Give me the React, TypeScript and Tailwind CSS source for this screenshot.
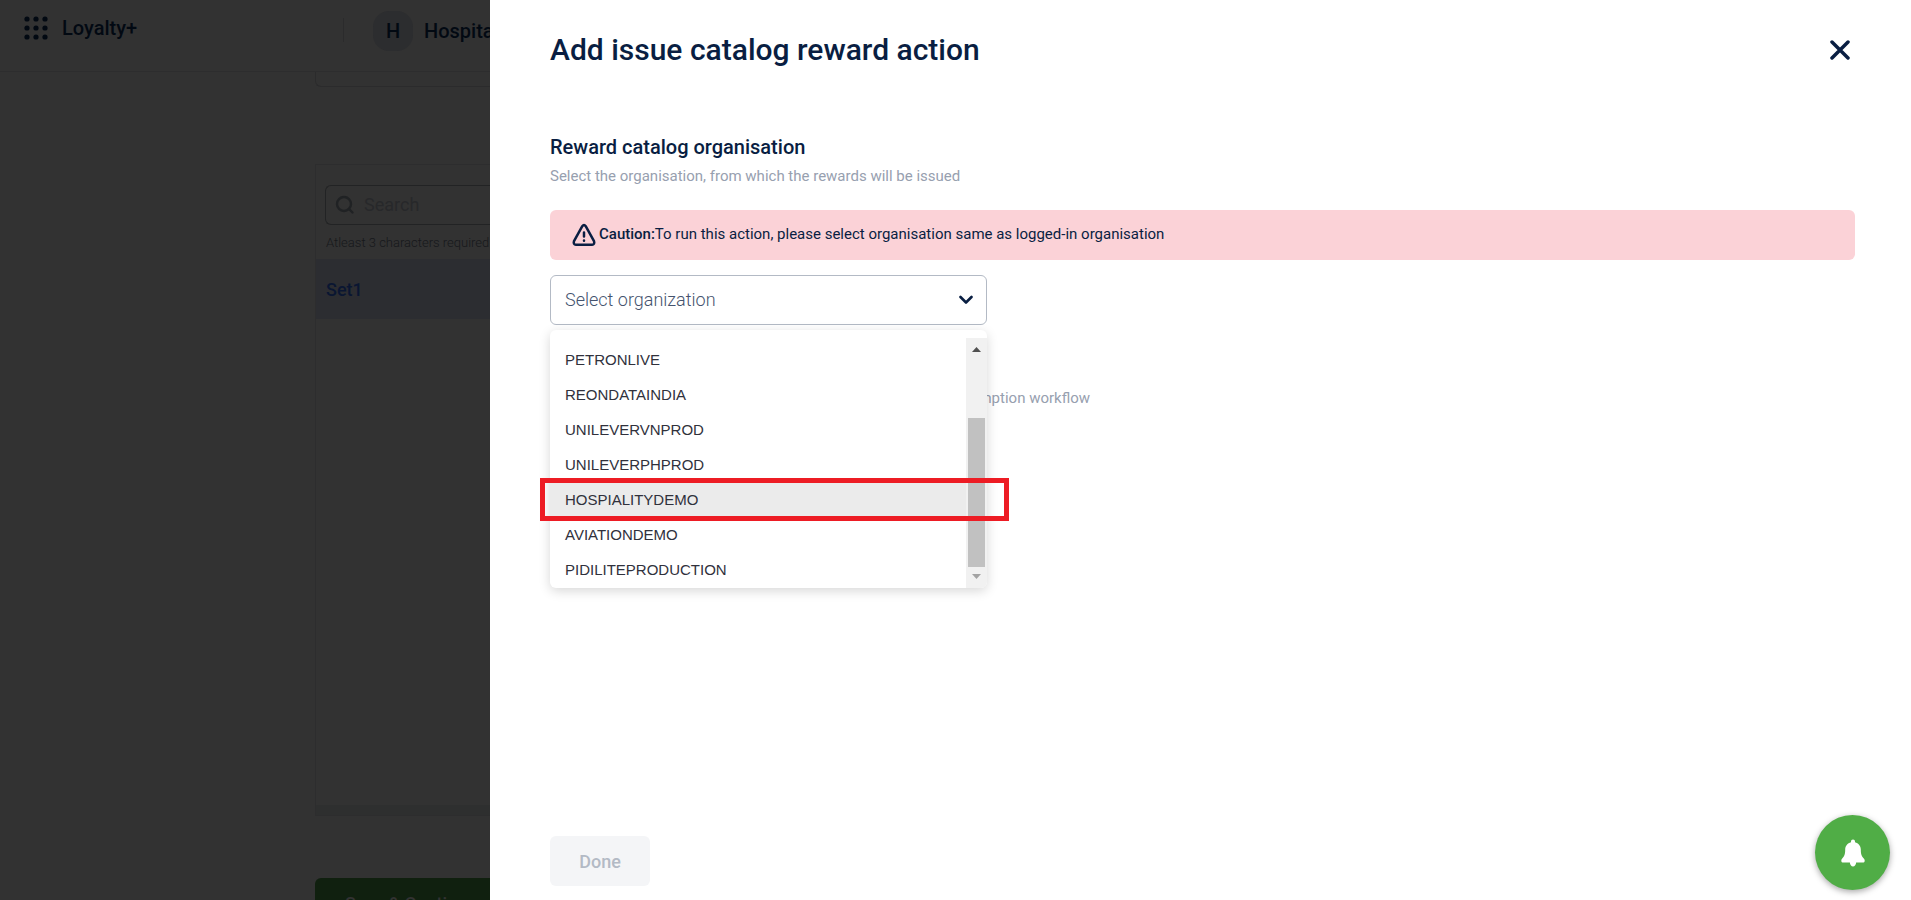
import { useState } from "react";

const organisations = [
  "PETRONLIVE",
  "REONDATAINDIA",
  "UNILEVERVNPROD",
  "UNILEVERPHPROD",
  "HOSPIALITYDEMO",
  "AVIATIONDEMO",
  "PIDILITEPRODUCTION",
];

function GridIcon() {
  return (
    <svg width="24" height="24" viewBox="0 0 24 24" fill="currentColor" aria-hidden="true">
      {[3, 12, 21].map((y) =>
        [3, 12, 21].map((x) => <circle key={`${x}-${y}`} cx={x} cy={y} r="2.6" />)
      )}
    </svg>
  );
}

function BackgroundPage() {
  return (
    <div className="flex h-full w-[490px] shrink-0 flex-col overflow-hidden bg-[#323232] text-[#020912]">
      <header className="flex h-18 shrink-0 border-b border-[#2d2d2e]">
        <button aria-label="Apps" className="ml-6 mt-4 size-6">
          <GridIcon />
        </button>
        <span className="ml-3.5 mt-4 w-[281px] shrink-0 text-[20px] leading-6 font-medium">Loyalty+</span>
        <span className="mt-[18px] h-6 w-px shrink-0 bg-[#2b2b2c]" />
        <span className="ml-[29px] mt-[11px] flex size-10 shrink-0 items-center justify-center rounded-2xl bg-[#2c2d2f] text-[20px] font-medium">
          H
        </span>
        <span className="ml-[11px] mt-[19px] text-[20px] leading-6 font-medium whitespace-nowrap">Hospitality</span>
      </header>
      <main className="ml-[315px] flex grow flex-col">
        <div className="h-[15px] shrink-0 rounded-bl-md border-b border-l border-[#2b2b2c]" />
        <section className="mt-[77px] flex h-[652px] shrink-0 flex-col border-y border-l border-[#2d2d2e]">
          <label className="mt-5 ml-[9px] flex h-10 shrink-0 items-center rounded-l-md border border-r-0 border-[#222324]">
            <svg width="20" height="20" viewBox="0 0 20 20" fill="none" stroke="#202224" strokeWidth="2.400" strokeLinecap="round" className="ml-[9px]" aria-hidden="true">
              <circle cx="9" cy="9" r="7" />
              <path d="M14 14l3.500 3.500" />
            </svg>
            <input aria-label="Search" placeholder="Search" className="ml-[9px] w-24 bg-transparent pb-0.5 text-[18px] outline-none placeholder:text-[#27282a]" />
          </label>
          <p className="mt-2.5 ml-2.5 text-[13px] leading-4 font-light whitespace-nowrap text-[#16181b]">Atleast 3 characters required</p>
          <a href="#set1" className="mt-2 flex h-[60px] shrink-0 items-center bg-[#2c2d31] pl-2.5 text-[18px] font-medium text-[#0a1632]">
            Set1
          </a>
          <div className="mt-auto h-2.5 bg-[#2e2f2f]" />
        </section>
        <button className="mt-[62px] h-[50px] shrink-0 rounded-l-md bg-[#10200f] pl-[30px] text-left text-[18px] font-medium whitespace-nowrap text-[#323232]">
          Save & Continue
        </button>
      </main>
    </div>
  );
}

function OrganisationMenu() {
  return (
    <div className="absolute top-full left-0 mt-[5px] w-full rounded-md bg-white pt-2 shadow-[0_3px_12px_rgba(0,0,0,0.16)]">
      <div className="flex overflow-hidden rounded-b-md">
        <ul role="listbox" className="grow pt-[5px]">
          {organisations.map((name) => (
            <li
              key={name}
              role="option"
              aria-selected={name === "HOSPIALITYDEMO"}
              className="flex h-[35px] items-center pl-[15px] font-['Liberation_Sans',Arial,sans-serif] text-[15px] text-[#30313c] aria-selected:bg-[#ebebeb]"
            >
              {name}
            </li>
          ))}
        </ul>
        <div className="flex w-[21px] flex-col items-center bg-[#f1f1f1]">
          <svg width="9" height="5" viewBox="0 0 9 5" className="mt-[9px]" aria-hidden="true">
            <path d="M0 5L4.500 0L9 5z" fill="#505050" />
          </svg>
          <div className="mt-[66px] h-[149px] w-[17px] bg-[#c1c1c1]" />
          <svg width="9" height="5" viewBox="0 0 9 5" className="mt-[7px]" aria-hidden="true">
            <path d="M0 0L4.500 5L9 0z" fill="#a3a3a3" />
          </svg>
        </div>
      </div>
      <div className="absolute top-[148px] -right-[22px] -left-2.5 h-[43px] border-5 border-[#ed1c24]" />
    </div>
  );
}

export default function App() {
  const [open, setOpen] = useState(true);
  return (
    <div className="flex h-screen overflow-hidden bg-white font-[Roboto,sans-serif]">
      <BackgroundPage />
      <div className="flex min-w-0 grow flex-col pl-[60px] text-[#091e42]">
        <header className="flex items-center justify-between pt-[30px] pr-[61px]">
          <h1 className="text-[30px] leading-10 font-medium">Add issue catalog reward action</h1>
          <button aria-label="Close" className="size-5">
            <svg width="20" height="20" viewBox="0 0 20 20" stroke="currentColor" strokeWidth="3.500" strokeLinecap="round" aria-hidden="true">
              <path d="M2 2L18 18M18 2L2 18" />
            </svg>
          </button>
        </header>
        <main className="grow pt-[65px] pr-14">
          <h2 className="text-[20px] leading-6 font-medium">Reward catalog organisation</h2>
          <p className="mt-[7px] text-[15px] leading-5 text-[#97a0af]">Select the organisation, from which the rewards will be issued</p>
          <div role="alert" className="mt-6 flex h-[50px] items-center rounded-md bg-[#fbd2d7] pl-[22px] text-[15px]">
            <svg width="24" height="24" viewBox="0 0 24 24" fill="none" stroke="currentColor" strokeWidth="2.500" strokeLinejoin="round" strokeLinecap="round" className="mr-[3px]" aria-hidden="true">
              <path d="M10.300 3.200L2 18.200Q1 21.500 4 21.800H20Q23 21.500 22 18.200L13.700 3.200Q12 .8 10.300 3.200zM12 9.500v4M12 17.500v.2" />
            </svg>
            <span className="pb-0.5"><strong className="font-medium">Caution:</strong>To run this action, please select organisation same as logged-in organisation</span>
          </div>
          <div className="relative z-10 mt-[15px] w-[437px]">
            <button
              aria-haspopup="listbox"
              aria-expanded={open}
              onClick={() => setOpen(!open)}
              className="flex h-[50px] w-full items-center justify-between rounded-md border border-[#b3bac5] bg-white pr-[13px] pl-3.5 text-[18px] text-[#44536e]"
            >
              <span className="pb-0.5 font-light">Select organization</span>
              <svg width="14" height="10" viewBox="0 0 14 10" fill="none" stroke="#091e42" strokeWidth="2.600" strokeLinecap="round" strokeLinejoin="round" aria-hidden="true">
                <path d="M1.500 2L7 7.500L12.500 2" />
              </svg>
            </button>
            {open && <OrganisationMenu />}
          </div>
          <p className="mt-[63px] w-[540px] text-right text-[15px] leading-5 text-[#97a0af]">Select the reward to be issued in the redemption workflow</p>
        </main>
        <footer className="flex items-end justify-between pr-[21px] pb-2.5">
          <button disabled className="mb-1 h-[50px] w-[100px] rounded-md bg-[#f4f5f7] text-[18px] font-medium text-[#b3bac5]">
            Done
          </button>
          <button aria-label="Notifications" className="flex size-[75px] items-center justify-center rounded-full bg-[#50ad46] shadow-[0_2px_6px_rgba(0,0,0,0.35)]">
            <svg width="24" height="28" viewBox="0 0 24 28" fill="white" aria-hidden="true">
              <path d="M12 .5C10.800 .5 10 1.300 10 2.400V3.200C6.500 4 4.200 7 4.200 10.500C4.200 16 3 17.500 1.200 19.500C-.5 21.500 .3 23.600 2.400 23.600H8.900C8.900 26 10.300 27.500 12 27.500S15.100 26 15.100 23.600H21.600C23.700 23.600 24.500 21.500 22.800 19.500C21 17.500 19.800 16 19.800 10.500C19.800 7 17.500 4 14 3.200V2.400C14 1.300 13.200 .5 12 .5z" />
            </svg>
          </button>
        </footer>
      </div>
    </div>
  );
}
